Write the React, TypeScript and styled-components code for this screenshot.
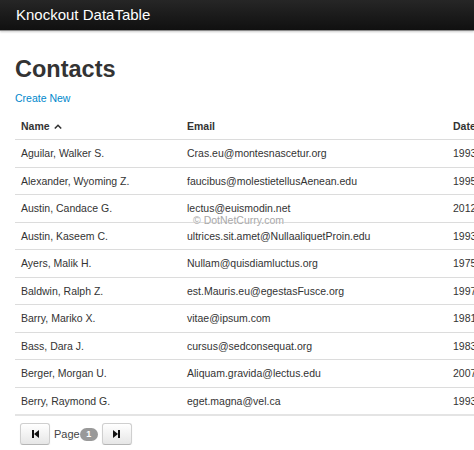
import React from "react";
import styled, { createGlobalStyle } from "styled-components";

interface Contact {
  name: string;
  email: string;
  date: string;
}

const contacts: Contact[] = [
  { name: "Aguilar, Walker S.", email: "Cras.eu@montesnascetur.org", date: "1993" },
  { name: "Alexander, Wyoming Z.", email: "faucibus@molestietellusAenean.edu", date: "1995" },
  { name: "Austin, Candace G.", email: "lectus@euismodin.net", date: "2012" },
  { name: "Austin, Kaseem C.", email: "ultrices.sit.amet@NullaaliquetProin.edu", date: "1993" },
  { name: "Ayers, Malik H.", email: "Nullam@quisdiamluctus.org", date: "1975" },
  { name: "Baldwin, Ralph Z.", email: "est.Mauris.eu@egestasFusce.org", date: "1997" },
  { name: "Barry, Mariko X.", email: "vitae@ipsum.com", date: "1981" },
  { name: "Bass, Dara J.", email: "cursus@sedconsequat.org", date: "1983" },
  { name: "Berger, Morgan U.", email: "Aliquam.gravida@lectus.edu", date: "2007" },
  { name: "Berry, Raymond G.", email: "eget.magna@vel.ca", date: "1993" },
];

export default function App() {
  return (
    <>
      <GlobalStyle />
      <Navbar>
        <Brand>Knockout DataTable</Brand>
      </Navbar>
      <Container>
        <Heading>Contacts</Heading>
        <CreateLink href="#">Create New</CreateLink>
        <TableWrap>
          <Table>
            <colgroup>
              <col style={{ width: 166 }} />
              <col style={{ width: 266 }} />
              <col />
            </colgroup>
            <thead>
              <tr>
                <HeadCell>
                  Name <SortIcon viewBox="0 0 10 8"><path d="M1 6.5 L5 2.5 L9 6.5" /></SortIcon>
                </HeadCell>
                <HeadCell>Email</HeadCell>
                <HeadCell>Date of Birth</HeadCell>
              </tr>
            </thead>
            <tbody>
              {contacts.map((c) => (
                <tr key={c.email}>
                  <Cell>{c.name}</Cell>
                  <Cell>{c.email}</Cell>
                  <Cell>{c.date}</Cell>
                </tr>
              ))}
            </tbody>
          </Table>
          <Watermark>© DotNetCurry.com</Watermark>
        </TableWrap>
        <Pager>
          <PageButton aria-label="First page">
            <svg width="7" height="8" viewBox="0 0 7 8">
              <rect x="0" y="0" width="2" height="8" fill="#111" />
              <path d="M7 0 L2 4 L7 8 Z" fill="#111" />
            </svg>
          </PageButton>
          <PageLabel>Page</PageLabel>
          <Badge>1</Badge>
          <PageButton aria-label="Last page">
            <svg width="7" height="8" viewBox="0 0 7 8">
              <path d="M0 0 L5 4 L0 8 Z" fill="#111" />
              <rect x="5" y="0" width="2" height="8" fill="#111" />
            </svg>
          </PageButton>
        </Pager>
      </Container>
    </>
  );
}

const GlobalStyle = createGlobalStyle`
  body {
    margin: 0;
    background: #fff;
    font-family: "Liberation Sans", Arial, sans-serif;
    color: #333;
    overflow: hidden;
  }
`;

const Navbar = styled.div`
  height: 30px;
  display: flex;
  align-items: center;
  padding: 0 16px;
  background: linear-gradient(to bottom, #262626, #101010);
  border-bottom: 1px solid #8a8a8a;
  box-shadow: 0 1px 2px rgba(0, 0, 0, 0.2);
`;

const Brand = styled.div`
  color: #fff;
  font-size: 15px;
  line-height: 1;
  margin-top: -1px;
`;

const Container = styled.div`
  padding: 0 0 0 15px;
  width: 600px;
`;

const Heading = styled.h1`
  margin: 23px 0 0;
  font-size: 23.5px;
  font-weight: bold;
  line-height: 30px;
  color: #333;
`;

const CreateLink = styled.a`
  display: inline-block;
  margin-top: 7px;
  font-size: 10.5px;
  line-height: 14px;
  color: #0088cc;
  text-decoration: none;
`;

const TableWrap = styled.div`
  position: relative;
  margin-top: 7px;
`;

const Table = styled.table`
  border-collapse: collapse;
  table-layout: fixed;
  width: 540px;
  font-size: 10.5px;
  border-bottom: 2px solid #e4e4e4;
`;

const HeadCell = styled.th`
  text-align: left;
  font-weight: bold;
  padding: 6px 6px;
  line-height: 14px;
  border-bottom: 1px solid #dcdcdc;
  white-space: nowrap;
  overflow: hidden;
`;

const SortIcon = styled.svg`
  width: 8px;
  height: 7px;
  margin-left: 1px;
  fill: none;
  stroke: #333;
  stroke-width: 2;
`;

const Cell = styled.td`
  padding: 6px 6px;
  line-height: 14.5px;
  border-top: 1px solid #dcdcdc;
  white-space: nowrap;
  overflow: hidden;
`;

const Watermark = styled.div`
  position: absolute;
  left: 178px;
  top: 101px;
  font-size: 10.5px;
  color: #a8a8a8;
  text-shadow: 0 0 1px #fff;
  pointer-events: none;
`;

const Pager = styled.div`
  display: flex;
  align-items: center;
  margin-top: 7px;
  padding-left: 5px;
`;

const PageButton = styled.button`
  width: 30px;
  height: 22px;
  display: flex;
  align-items: center;
  justify-content: center;
  padding: 0;
  border: 1px solid #cfcfcf;
  border-bottom-color: #b5b5b5;
  border-radius: 3px;
  background: linear-gradient(to bottom, #ffffff, #e6e6e6);
  box-shadow: inset 0 1px 0 rgba(255, 255, 255, 0.2), 0 1px 2px rgba(0, 0, 0, 0.05);
`;

const PageLabel = styled.span`
  margin-left: 4px;
  font-size: 11px;
  color: #444;
`;

const Badge = styled.span`
  display: inline-flex;
  align-items: center;
  justify-content: center;
  min-width: 18px;
  height: 13px;
  border-radius: 7px;
  background: #999;
  color: #fff;
  font-size: 9px;
  font-weight: bold;
  margin-right: 4px;
`;
